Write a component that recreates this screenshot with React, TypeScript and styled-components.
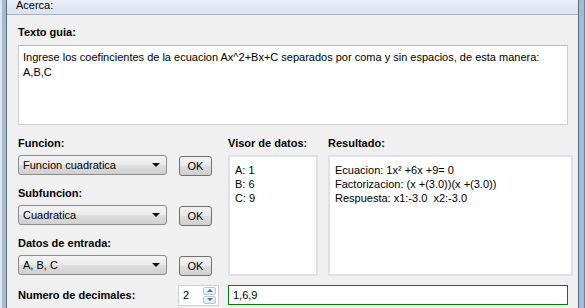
import React from "react";
import styled, { createGlobalStyle } from "styled-components";

const GlobalStyle = createGlobalStyle`
  html, body {
    margin: 0;
    padding: 0;
    height: 308px;
    overflow: hidden;
  }
  body {
    font-family: "Liberation Sans", Arial, sans-serif;
    font-size: 11px;
    color: #000;
    background: #f0f0f0;
  }
`;

const Frame = styled.div`
  display: flex;
  height: 308px;
  padding: 0 7px 0 6px;
  background: #a6bad6;
  box-shadow: inset 2px 0 #e0e5ed, inset -1px 0 #dde3eb, inset -2px 0 #6f809a;
`;

const Window = styled.div`
  flex: 1;
  display: flex;
  flex-direction: column;
  min-width: 0;
  background: #f0f0f0;
  border-left: 1px solid #5d6b82;
  border-right: 1px solid #5d6b82;
  overflow: hidden;
`;

const MenuBar = styled.div`
  height: 14px;
  flex: none;
  padding-left: 9px;
  background: linear-gradient(#e9eef7, #dbe3f0);
  border-bottom: 1px solid #a9b1c4;
  overflow: hidden;
`;

const MenuLabel = styled.div`
  line-height: 13px;
  margin-top: -1px;
`;

const Content = styled.div`
  display: flex;
  flex-direction: column;
  padding: 11px 10px 0 11px;
`;

const Label = styled.div`
  font-weight: bold;
  line-height: 13px;
  white-space: nowrap;
`;

const GuideArea = styled.div`
  margin-top: 6px;
  height: 70px;
  padding: 4px;
  background: #fff;
  border: 1px solid #cfcfcf;
  border-top-color: #b9b9b9;
  line-height: 15px;
`;

const Grid = styled.div`
  display: grid;
  grid-template-columns: 200px 90px 245px;
  column-gap: 10px;
  margin-top: 12px;
`;

const Column = styled.div`
  display: flex;
  flex-direction: column;
`;

const Group = styled.div`
  display: flex;
  flex-direction: column;
  gap: 5px;
  & + & {
    margin-top: 11px;
  }
`;

const ControlRow = styled.div`
  display: flex;
  align-items: flex-start;
  gap: 12px;
`;

const Combo = styled.div`
  box-sizing: border-box;
  width: 149px;
  height: 20px;
  display: flex;
  align-items: center;
  justify-content: space-between;
  padding: 0 6px 0 4px;
  border: 1px solid #8b8b8b;
  border-radius: 3px;
  background: linear-gradient(#f3f3f3, #ebebeb 48%, #dedede 52%, #d0d0d0);
`;

const Arrow = styled.span`
  width: 0;
  height: 0;
  border-left: 4px solid transparent;
  border-right: 4px solid transparent;
  border-top: 4px solid #111;
`;

const Button = styled.button`
  box-sizing: border-box;
  width: 33px;
  height: 20px;
  margin-top: 1px;
  padding: 0;
  font: inherit;
  color: #000;
  border: 1px solid #707070;
  border-radius: 3px;
  background: linear-gradient(#f2f2f2, #ebebeb 48%, #dddddd 52%, #cfcfcf);
`;

const Box = styled.div<{ $height?: number }>`
  box-sizing: border-box;
  margin-top: 5px;
  height: ${(p) => p.$height ?? 121}px;
  padding: 6px 5px;
  background: #fff;
  border: 2px solid #e0e0e8;
  line-height: 14px;
  white-space: nowrap;
`;

const DecimalRow = styled.div`
  display: flex;
  align-items: center;
  margin-top: 9px;
  height: 20px;
`;

const DecimalLabel = styled(Label)`
  width: 160px;
`;

const Spinner = styled.div`
  box-sizing: border-box;
  width: 41px;
  height: 21px;
  display: flex;
  align-items: center;
  justify-content: space-between;
  padding: 1px 2px 1px 4px;
  background: #fff;
  border: 1px solid #cfcfd6;
`;

const SpinButtons = styled.div`
  display: flex;
  flex-direction: column;
  gap: 1px;
`;

const SpinButton = styled.div<{ $up?: boolean }>`
  box-sizing: border-box;
  width: 13px;
  height: 8px;
  display: flex;
  align-items: center;
  justify-content: center;
  border: 1px solid #b8c6d9;
  border-radius: 2px;
  background: linear-gradient(#f4f7fb, #dfe7f1);
  &::after {
    content: "";
    border-left: 3px solid transparent;
    border-right: 3px solid transparent;
    ${(p) =>
      p.$up ? "border-bottom: 3px solid #4d6e9c;" : "border-top: 3px solid #4d6e9c;"}
  }
`;

const GreenInput = styled.div`
  box-sizing: border-box;
  margin-left: 9px;
  width: 340px;
  height: 20px;
  padding: 0 4px;
  display: flex;
  align-items: center;
  background: #fff;
  border: 1px solid #008000;
`;

const selectors = [
  { label: "Funcion:", value: "Funcion cuadratica" },
  { label: "Subfuncion:", value: "Cuadratica" },
  { label: "Datos de entrada:", value: "A, B, C" },
];

export default function App() {
  return (
    <>
      <GlobalStyle />
      <Frame>
        <Window>
          <MenuBar>
            <MenuLabel>Acerca:</MenuLabel>
          </MenuBar>
          <Content>
            <Label>Texto guia:</Label>
            <GuideArea>
              Ingrese los coefincientes de la ecuacion Ax^2+Bx+C separados por
              coma y sin espacios, de esta manera:
              <br />
              A,B,C
            </GuideArea>
            <Grid>
              <Column>
                {selectors.map((s) => (
                  <Group key={s.label}>
                    <Label>{s.label}</Label>
                    <ControlRow>
                      <Combo>
                        <span>{s.value}</span>
                        <Arrow />
                      </Combo>
                      <Button>OK</Button>
                    </ControlRow>
                  </Group>
                ))}
              </Column>
              <Column>
                <Label>Visor de datos:</Label>
                <Box>
                  A: 1
                  <br />
                  B: 6
                  <br />
                  C: 9
                </Box>
              </Column>
              <Column>
                <Label>Resultado:</Label>
                <Box>
                  Ecuacion: 1x² +6x +9= 0
                  <br />
                  Factorizacion: (x +(3.0))(x +(3.0))
                  <br />
                  Respuesta: x1:-3.0&nbsp; x2:-3.0
                </Box>
              </Column>
            </Grid>
            <DecimalRow>
              <DecimalLabel>Numero de decimales:</DecimalLabel>
              <Spinner>
                <span>2</span>
                <SpinButtons>
                  <SpinButton $up />
                  <SpinButton />
                </SpinButtons>
              </Spinner>
              <GreenInput>1,6,9</GreenInput>
            </DecimalRow>
          </Content>
        </Window>
      </Frame>
    </>
  );
}
